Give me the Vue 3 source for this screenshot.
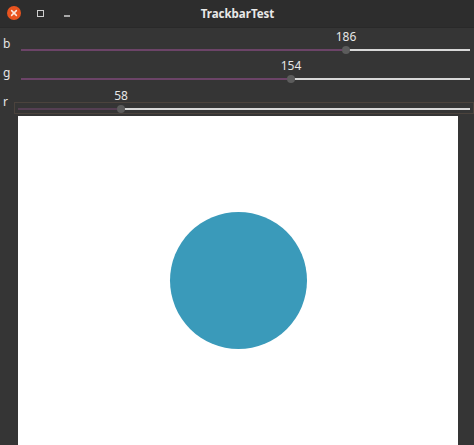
<script setup>
const bars = [
  { name: 'b', value: 186, pos: 325, focus: false },
  { name: 'g', value: 154, pos: 270, focus: false },
  { name: 'r', value: 58, pos: 103, focus: true }
]
</script>

<template>
  <div class="win">
    <div class="head">
      <div class="btns">
        <span class="close">
          <svg width="14" height="14" viewBox="0 0 14 14">
            <circle cx="7" cy="7" r="7" fill="#e9541f" />
            <path d="M4.6 4.6l4.8 4.8M9.4 4.6l-4.800 4.800" stroke="#fbe6dc" stroke-width="1.500" stroke-linecap="round" />
          </svg>
        </span>
        <span class="max"></span>
        <span class="min"></span>
      </div>
      <div class="title">TrackbarTest</div>
    </div>
    <div class="bars">
      <div v-for="bar in bars" :key="bar.name" class="row" :class="{ focus: bar.focus }">
        <span class="lbl">{{ bar.name }}</span>
        <div class="slider">
          <span class="val" :style="{ left: bar.pos + 'px' }">{{ bar.value }}</span>
          <div class="low" :style="{ width: bar.pos + 'px' }"></div>
          <div class="high"></div>
          <span class="thumb" :style="{ left: bar.pos + 'px' }"></span>
        </div>
      </div>
    </div>
    <div class="canvas">
      <div class="circle"></div>
    </div>
  </div>
</template>

<style scoped>
.win {
  height: 445px;
  overflow: hidden;
  background: #353535;
  font-family: "Noto Sans", "Liberation Sans", sans-serif;
  color: #e6e6e6;
}
.head {
  position: relative;
  display: flex;
  align-items: center;
  justify-content: center;
  height: 27px;
  background: #2d2d2d;
  border-bottom: 1px solid #292929;
}
.btns {
  position: absolute;
  left: 7px;
  top: 6px;
  display: flex;
  align-items: center;
}
.close {
  display: block;
  width: 14px;
  height: 14px;
  line-height: 0;
}
.max {
  box-sizing: border-box;
  width: 7px;
  height: 7px;
  margin-left: 16px;
  border: 1.500px solid #cfcfcf;
}
.min {
  width: 6px;
  height: 2px;
  margin-left: 20px;
  margin-top: 5px;
  background: #a8a8a8;
}
.title {
  margin-left: 1px;
  font-size: 11.500px;
  font-weight: 700;
  color: #e8e8e8;
}
.bars {
  display: flex;
  flex-direction: column;
}
.row {
  position: relative;
  display: flex;
  height: 29px;
  padding-left: 21px;
  padding-right: 4px;
}
.row:nth-child(3) {
  height: 30px;
}
.lbl {
  position: absolute;
  left: 3px;
  top: 8px;
  font-size: 12px;
  line-height: 16px;
}
.slider {
  position: relative;
  display: flex;
  flex: 1;
  align-items: center;
  height: 3px;
  margin-top: 20px;
}
.low {
  height: 2px;
  background: #6c4468;
}
.high {
  flex: 1;
  height: 2px;
  background: #d8d8d8;
}
.thumb {
  position: absolute;
  top: -2px;
  width: 8px;
  height: 8px;
  margin-left: -4px;
  border-radius: 50%;
  background: #5c5c5c;
}
.val {
  position: absolute;
  top: -19px;
  transform: translateX(-50%);
  font-size: 12px;
  line-height: 16px;
}
.row.focus .slider::before {
  content: "";
  position: absolute;
  left: -4px;
  right: -4px;
  top: -5px;
  height: 10px;
  border: 1px solid #4b433d;
}
.row.focus .low {
  background: #553f53;
}
.row.focus .slider {
  margin-left: -3px;
  margin-top: 21px;
}
.canvas {
  display: flex;
  justify-content: center;
  box-sizing: border-box;
  width: 440px;
  height: 440px;
  margin-left: 18px;
  padding-top: 96px;
  background: #ffffff;
}
.circle {
  width: 137px;
  height: 137px;
  border-radius: 50%;
  background: #3a9aba;
}
</style>
